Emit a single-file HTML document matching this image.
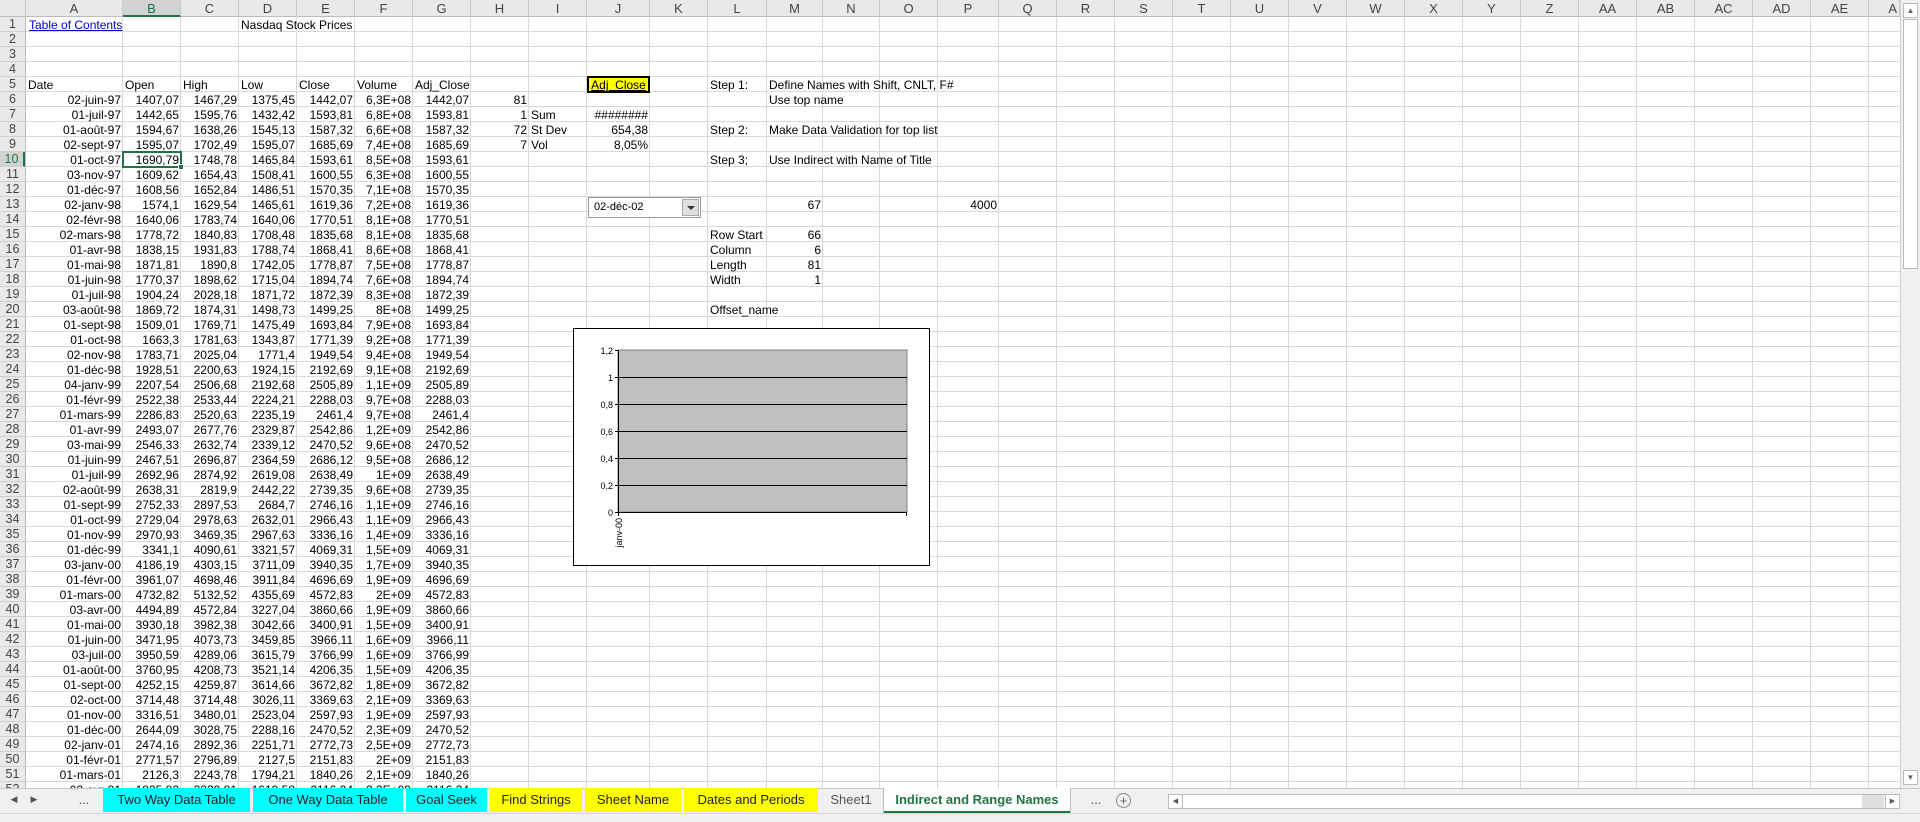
<!DOCTYPE html>
<html><head><meta charset="utf-8">
<style>
*{margin:0;padding:0;box-sizing:border-box}
body{width:1920px;height:822px;overflow:hidden;background:#fff;font-family:"Liberation Sans",Arial,sans-serif;font-size:12px;color:#000;position:relative}
#sheet{position:absolute;left:26px;top:17px;width:1874px;height:771px;background:repeating-linear-gradient(to bottom,transparent 0,transparent 14px,#d9d9d9 14px,#d9d9d9 15px)}
.vl{position:absolute;top:0;width:1px;height:771px;background:#d9d9d9}
#colh{position:absolute;left:0;top:0;width:1900px;height:17px;background:#e9e9e9;border-bottom:1px solid #bcbcbc}
#colh span{position:absolute;top:0;height:17px;line-height:17px;text-align:center;color:#444;font-size:13px;border-right:1px solid #c8c8c8}
#rowh{position:absolute;left:0;top:17px;width:26px;height:771px;background:#e9e9e9;border-right:1px solid #bcbcbc;overflow:hidden}
#rowh div{height:15px;line-height:15px;text-align:center;color:#444;font-size:12.5px;border-bottom:1px solid #d0d0d0}
.r,.t{top:calc(17px + (var(--r) - 1) * 15px)}
.r{position:absolute;left:0;height:15px;line-height:16px;width:1000px}
.r span{position:absolute;top:0;white-space:nowrap;text-align:right}
.a{left:27px;width:94px}.b{left:123px;width:56px}.c{left:181px;width:56px}.d{left:239px;width:56px}.e{left:297px;width:56px}.f{left:355px;width:56px}.g{left:413px;width:56px}
.t{position:absolute;white-space:nowrap;line-height:16px}
.tab{position:absolute;top:788px;height:24px;line-height:23px;text-align:center;font-size:13px;color:#222}
</style></head><body>
<div id="colh">
<span style="left:0;width:26px"></span>
<span style="left:26px;width:97px">A</span>
<span style="left:123px;width:58px;background:#d2d2d2;border-bottom:2px solid #217346;color:#217346">B</span>
<span style="left:181px;width:58px">C</span><span style="left:239px;width:58px">D</span><span style="left:297px;width:58px">E</span><span style="left:355px;width:58px">F</span><span style="left:413px;width:58px">G</span><span style="left:471px;width:58px">H</span><span style="left:529px;width:58px">I</span><span style="left:587px;width:63px">J</span><span style="left:650px;width:58px">K</span><span style="left:708px;width:59px">L</span><span style="left:767px;width:56px">M</span><span style="left:823px;width:57px">N</span><span style="left:880px;width:58px">O</span><span style="left:938px;width:61px">P</span><span style="left:999px;width:58px">Q</span><span style="left:1057px;width:58px">R</span><span style="left:1115px;width:58px">S</span><span style="left:1173px;width:58px">T</span><span style="left:1231px;width:58px">U</span><span style="left:1289px;width:58px">V</span><span style="left:1347px;width:58px">W</span><span style="left:1405px;width:58px">X</span><span style="left:1463px;width:58px">Y</span><span style="left:1521px;width:58px">Z</span><span style="left:1579px;width:58px">AA</span><span style="left:1637px;width:58px">AB</span><span style="left:1695px;width:58px">AC</span><span style="left:1753px;width:58px">AD</span><span style="left:1811px;width:58px">AE</span><span style="left:1869px;width:31px;text-align:right;padding-right:2px">A</span>
</div>
<div id="sheet">
<div class="vl" style="left:96px"></div><div class="vl" style="left:154px"></div><div class="vl" style="left:212px"></div><div class="vl" style="left:270px"></div><div class="vl" style="left:328px"></div><div class="vl" style="left:386px"></div><div class="vl" style="left:444px"></div><div class="vl" style="left:502px"></div><div class="vl" style="left:560px"></div><div class="vl" style="left:623px"></div><div class="vl" style="left:681px"></div><div class="vl" style="left:740px"></div><div class="vl" style="left:796px"></div><div class="vl" style="left:853px"></div><div class="vl" style="left:911px"></div><div class="vl" style="left:972px"></div><div class="vl" style="left:1030px"></div><div class="vl" style="left:1088px"></div><div class="vl" style="left:1146px"></div><div class="vl" style="left:1204px"></div><div class="vl" style="left:1262px"></div><div class="vl" style="left:1320px"></div><div class="vl" style="left:1378px"></div><div class="vl" style="left:1436px"></div><div class="vl" style="left:1494px"></div><div class="vl" style="left:1552px"></div><div class="vl" style="left:1610px"></div><div class="vl" style="left:1668px"></div><div class="vl" style="left:1726px"></div><div class="vl" style="left:1784px"></div><div class="vl" style="left:1842px"></div>
</div>
<div id="rowh">
<div>1</div><div>2</div><div>3</div><div>4</div><div>5</div><div>6</div><div>7</div><div>8</div><div>9</div><div style="background:#d2d2d2;color:#217346;border-right:2px solid #217346">10</div><div>11</div><div>12</div><div>13</div><div>14</div><div>15</div><div>16</div><div>17</div><div>18</div><div>19</div><div>20</div><div>21</div><div>22</div><div>23</div><div>24</div><div>25</div><div>26</div><div>27</div><div>28</div><div>29</div><div>30</div><div>31</div><div>32</div><div>33</div><div>34</div><div>35</div><div>36</div><div>37</div><div>38</div><div>39</div><div>40</div><div>41</div><div>42</div><div>43</div><div>44</div><div>45</div><div>46</div><div>47</div><div>48</div><div>49</div><div>50</div><div>51</div><div>52</div>
</div>

<div class="t" style="--r:1;left:29px;color:#0000d0;text-decoration:underline">Table of Contents</div>
<div class="t" style="--r:1;left:241px">Nasdaq Stock Prices</div>
<div class="t" style="--r:5;left:28px">Date</div>
<div class="t" style="--r:5;left:125px">Open</div>
<div class="t" style="--r:5;left:183px">High</div>
<div class="t" style="--r:5;left:241px">Low</div>
<div class="t" style="--r:5;left:299px">Close</div>
<div class="t" style="--r:5;left:357px">Volume</div>
<div class="t" style="--r:5;left:415px">Adj_Close</div>
<div class="t" style="--r:5;left:587px;width:63px;height:17px;margin-top:-1px;background:#ffff00;border:2px solid #000;text-align:center;line-height:14px;text-decoration:underline">Adj_Close</div>
<div class="t" style="--r:6;left:471px;width:56px;text-align:right">81</div>
<div class="t" style="--r:7;left:471px;width:56px;text-align:right">1</div>
<div class="t" style="--r:8;left:471px;width:56px;text-align:right">72</div>
<div class="t" style="--r:9;left:471px;width:56px;text-align:right">7</div>
<div class="t" style="--r:7;left:531px">Sum</div>
<div class="t" style="--r:8;left:531px">St Dev</div>
<div class="t" style="--r:9;left:531px">Vol</div>
<div class="t" style="--r:7;left:587px;width:61px;text-align:right">########</div>
<div class="t" style="--r:8;left:587px;width:61px;text-align:right">654,38</div>
<div class="t" style="--r:9;left:587px;width:61px;text-align:right">8,05%</div>
<div class="t" style="--r:5;left:710px">Step 1:</div>
<div class="t" style="--r:5;left:769px">Define Names with Shift, CNLT, F#</div>
<div class="t" style="--r:6;left:769px">Use top name</div>
<div class="t" style="--r:8;left:710px">Step 2:</div>
<div class="t" style="--r:8;left:769px">Make Data Validation for top list</div>
<div class="t" style="--r:10;left:710px">Step 3;</div>
<div class="t" style="--r:10;left:769px">Use Indirect with Name of Title</div>
<div class="t" style="--r:13;left:767px;width:54px;text-align:right">67</div>
<div class="t" style="--r:13;left:938px;width:59px;text-align:right">4000</div>
<div class="t" style="--r:15;left:710px">Row Start</div>
<div class="t" style="--r:16;left:710px">Column</div>
<div class="t" style="--r:17;left:710px">Length</div>
<div class="t" style="--r:18;left:710px">Width</div>
<div class="t" style="--r:15;left:767px;width:54px;text-align:right">66</div>
<div class="t" style="--r:16;left:767px;width:54px;text-align:right">6</div>
<div class="t" style="--r:17;left:767px;width:54px;text-align:right">81</div>
<div class="t" style="--r:18;left:767px;width:54px;text-align:right">1</div>
<div class="t" style="--r:20;left:710px">Offset_name</div>

<div style="position:absolute;left:588px;top:197px;width:113px;height:21px;border:1px solid #999;background:#fff">
<div style="position:absolute;left:5px;top:3px;font-size:11px">02-déc-02</div>
<div style="position:absolute;right:1px;top:1px;width:17px;height:17px;background:#e0e0e0;border:1px solid #aaa"><div style="position:absolute;left:4px;top:6px;width:0;height:0;border-left:4px solid transparent;border-right:4px solid transparent;border-top:4px solid #333"></div></div>
</div>

<div style="position:absolute;left:122px;top:151px;width:60px;height:17px;border:2px solid #217346"></div>
<div style="position:absolute;left:178px;top:164px;width:6px;height:6px;background:#217346;border:1px solid #fff"></div>

<div class="r" style="--r:6"><span class="a">02-juin-97</span><span class="b">1407,07</span><span class="c">1467,29</span><span class="d">1375,45</span><span class="e">1442,07</span><span class="f">6,3E+08</span><span class="g">1442,07</span></div>
<div class="r" style="--r:7"><span class="a">01-juil-97</span><span class="b">1442,65</span><span class="c">1595,76</span><span class="d">1432,42</span><span class="e">1593,81</span><span class="f">6,8E+08</span><span class="g">1593,81</span></div>
<div class="r" style="--r:8"><span class="a">01-août-97</span><span class="b">1594,67</span><span class="c">1638,26</span><span class="d">1545,13</span><span class="e">1587,32</span><span class="f">6,6E+08</span><span class="g">1587,32</span></div>
<div class="r" style="--r:9"><span class="a">02-sept-97</span><span class="b">1595,07</span><span class="c">1702,49</span><span class="d">1595,07</span><span class="e">1685,69</span><span class="f">7,4E+08</span><span class="g">1685,69</span></div>
<div class="r" style="--r:10"><span class="a">01-oct-97</span><span class="b">1690,79</span><span class="c">1748,78</span><span class="d">1465,84</span><span class="e">1593,61</span><span class="f">8,5E+08</span><span class="g">1593,61</span></div>
<div class="r" style="--r:11"><span class="a">03-nov-97</span><span class="b">1609,62</span><span class="c">1654,43</span><span class="d">1508,41</span><span class="e">1600,55</span><span class="f">6,3E+08</span><span class="g">1600,55</span></div>
<div class="r" style="--r:12"><span class="a">01-déc-97</span><span class="b">1608,56</span><span class="c">1652,84</span><span class="d">1486,51</span><span class="e">1570,35</span><span class="f">7,1E+08</span><span class="g">1570,35</span></div>
<div class="r" style="--r:13"><span class="a">02-janv-98</span><span class="b">1574,1</span><span class="c">1629,54</span><span class="d">1465,61</span><span class="e">1619,36</span><span class="f">7,2E+08</span><span class="g">1619,36</span></div>
<div class="r" style="--r:14"><span class="a">02-févr-98</span><span class="b">1640,06</span><span class="c">1783,74</span><span class="d">1640,06</span><span class="e">1770,51</span><span class="f">8,1E+08</span><span class="g">1770,51</span></div>
<div class="r" style="--r:15"><span class="a">02-mars-98</span><span class="b">1778,72</span><span class="c">1840,83</span><span class="d">1708,48</span><span class="e">1835,68</span><span class="f">8,1E+08</span><span class="g">1835,68</span></div>
<div class="r" style="--r:16"><span class="a">01-avr-98</span><span class="b">1838,15</span><span class="c">1931,83</span><span class="d">1788,74</span><span class="e">1868,41</span><span class="f">8,6E+08</span><span class="g">1868,41</span></div>
<div class="r" style="--r:17"><span class="a">01-mai-98</span><span class="b">1871,81</span><span class="c">1890,8</span><span class="d">1742,05</span><span class="e">1778,87</span><span class="f">7,5E+08</span><span class="g">1778,87</span></div>
<div class="r" style="--r:18"><span class="a">01-juin-98</span><span class="b">1770,37</span><span class="c">1898,62</span><span class="d">1715,04</span><span class="e">1894,74</span><span class="f">7,6E+08</span><span class="g">1894,74</span></div>
<div class="r" style="--r:19"><span class="a">01-juil-98</span><span class="b">1904,24</span><span class="c">2028,18</span><span class="d">1871,72</span><span class="e">1872,39</span><span class="f">8,3E+08</span><span class="g">1872,39</span></div>
<div class="r" style="--r:20"><span class="a">03-août-98</span><span class="b">1869,72</span><span class="c">1874,31</span><span class="d">1498,73</span><span class="e">1499,25</span><span class="f">8E+08</span><span class="g">1499,25</span></div>
<div class="r" style="--r:21"><span class="a">01-sept-98</span><span class="b">1509,01</span><span class="c">1769,71</span><span class="d">1475,49</span><span class="e">1693,84</span><span class="f">7,9E+08</span><span class="g">1693,84</span></div>
<div class="r" style="--r:22"><span class="a">01-oct-98</span><span class="b">1663,3</span><span class="c">1781,63</span><span class="d">1343,87</span><span class="e">1771,39</span><span class="f">9,2E+08</span><span class="g">1771,39</span></div>
<div class="r" style="--r:23"><span class="a">02-nov-98</span><span class="b">1783,71</span><span class="c">2025,04</span><span class="d">1771,4</span><span class="e">1949,54</span><span class="f">9,4E+08</span><span class="g">1949,54</span></div>
<div class="r" style="--r:24"><span class="a">01-déc-98</span><span class="b">1928,51</span><span class="c">2200,63</span><span class="d">1924,15</span><span class="e">2192,69</span><span class="f">9,1E+08</span><span class="g">2192,69</span></div>
<div class="r" style="--r:25"><span class="a">04-janv-99</span><span class="b">2207,54</span><span class="c">2506,68</span><span class="d">2192,68</span><span class="e">2505,89</span><span class="f">1,1E+09</span><span class="g">2505,89</span></div>
<div class="r" style="--r:26"><span class="a">01-févr-99</span><span class="b">2522,38</span><span class="c">2533,44</span><span class="d">2224,21</span><span class="e">2288,03</span><span class="f">9,7E+08</span><span class="g">2288,03</span></div>
<div class="r" style="--r:27"><span class="a">01-mars-99</span><span class="b">2286,83</span><span class="c">2520,63</span><span class="d">2235,19</span><span class="e">2461,4</span><span class="f">9,7E+08</span><span class="g">2461,4</span></div>
<div class="r" style="--r:28"><span class="a">01-avr-99</span><span class="b">2493,07</span><span class="c">2677,76</span><span class="d">2329,87</span><span class="e">2542,86</span><span class="f">1,2E+09</span><span class="g">2542,86</span></div>
<div class="r" style="--r:29"><span class="a">03-mai-99</span><span class="b">2546,33</span><span class="c">2632,74</span><span class="d">2339,12</span><span class="e">2470,52</span><span class="f">9,6E+08</span><span class="g">2470,52</span></div>
<div class="r" style="--r:30"><span class="a">01-juin-99</span><span class="b">2467,51</span><span class="c">2696,87</span><span class="d">2364,59</span><span class="e">2686,12</span><span class="f">9,5E+08</span><span class="g">2686,12</span></div>
<div class="r" style="--r:31"><span class="a">01-juil-99</span><span class="b">2692,96</span><span class="c">2874,92</span><span class="d">2619,08</span><span class="e">2638,49</span><span class="f">1E+09</span><span class="g">2638,49</span></div>
<div class="r" style="--r:32"><span class="a">02-août-99</span><span class="b">2638,31</span><span class="c">2819,9</span><span class="d">2442,22</span><span class="e">2739,35</span><span class="f">9,6E+08</span><span class="g">2739,35</span></div>
<div class="r" style="--r:33"><span class="a">01-sept-99</span><span class="b">2752,33</span><span class="c">2897,53</span><span class="d">2684,7</span><span class="e">2746,16</span><span class="f">1,1E+09</span><span class="g">2746,16</span></div>
<div class="r" style="--r:34"><span class="a">01-oct-99</span><span class="b">2729,04</span><span class="c">2978,63</span><span class="d">2632,01</span><span class="e">2966,43</span><span class="f">1,1E+09</span><span class="g">2966,43</span></div>
<div class="r" style="--r:35"><span class="a">01-nov-99</span><span class="b">2970,93</span><span class="c">3469,35</span><span class="d">2967,63</span><span class="e">3336,16</span><span class="f">1,4E+09</span><span class="g">3336,16</span></div>
<div class="r" style="--r:36"><span class="a">01-déc-99</span><span class="b">3341,1</span><span class="c">4090,61</span><span class="d">3321,57</span><span class="e">4069,31</span><span class="f">1,5E+09</span><span class="g">4069,31</span></div>
<div class="r" style="--r:37"><span class="a">03-janv-00</span><span class="b">4186,19</span><span class="c">4303,15</span><span class="d">3711,09</span><span class="e">3940,35</span><span class="f">1,7E+09</span><span class="g">3940,35</span></div>
<div class="r" style="--r:38"><span class="a">01-févr-00</span><span class="b">3961,07</span><span class="c">4698,46</span><span class="d">3911,84</span><span class="e">4696,69</span><span class="f">1,9E+09</span><span class="g">4696,69</span></div>
<div class="r" style="--r:39"><span class="a">01-mars-00</span><span class="b">4732,82</span><span class="c">5132,52</span><span class="d">4355,69</span><span class="e">4572,83</span><span class="f">2E+09</span><span class="g">4572,83</span></div>
<div class="r" style="--r:40"><span class="a">03-avr-00</span><span class="b">4494,89</span><span class="c">4572,84</span><span class="d">3227,04</span><span class="e">3860,66</span><span class="f">1,9E+09</span><span class="g">3860,66</span></div>
<div class="r" style="--r:41"><span class="a">01-mai-00</span><span class="b">3930,18</span><span class="c">3982,38</span><span class="d">3042,66</span><span class="e">3400,91</span><span class="f">1,5E+09</span><span class="g">3400,91</span></div>
<div class="r" style="--r:42"><span class="a">01-juin-00</span><span class="b">3471,95</span><span class="c">4073,73</span><span class="d">3459,85</span><span class="e">3966,11</span><span class="f">1,6E+09</span><span class="g">3966,11</span></div>
<div class="r" style="--r:43"><span class="a">03-juil-00</span><span class="b">3950,59</span><span class="c">4289,06</span><span class="d">3615,79</span><span class="e">3766,99</span><span class="f">1,6E+09</span><span class="g">3766,99</span></div>
<div class="r" style="--r:44"><span class="a">01-août-00</span><span class="b">3760,95</span><span class="c">4208,73</span><span class="d">3521,14</span><span class="e">4206,35</span><span class="f">1,5E+09</span><span class="g">4206,35</span></div>
<div class="r" style="--r:45"><span class="a">01-sept-00</span><span class="b">4252,15</span><span class="c">4259,87</span><span class="d">3614,66</span><span class="e">3672,82</span><span class="f">1,8E+09</span><span class="g">3672,82</span></div>
<div class="r" style="--r:46"><span class="a">02-oct-00</span><span class="b">3714,48</span><span class="c">3714,48</span><span class="d">3026,11</span><span class="e">3369,63</span><span class="f">2,1E+09</span><span class="g">3369,63</span></div>
<div class="r" style="--r:47"><span class="a">01-nov-00</span><span class="b">3316,51</span><span class="c">3480,01</span><span class="d">2523,04</span><span class="e">2597,93</span><span class="f">1,9E+09</span><span class="g">2597,93</span></div>
<div class="r" style="--r:48"><span class="a">01-déc-00</span><span class="b">2644,09</span><span class="c">3028,75</span><span class="d">2288,16</span><span class="e">2470,52</span><span class="f">2,3E+09</span><span class="g">2470,52</span></div>
<div class="r" style="--r:49"><span class="a">02-janv-01</span><span class="b">2474,16</span><span class="c">2892,36</span><span class="d">2251,71</span><span class="e">2772,73</span><span class="f">2,5E+09</span><span class="g">2772,73</span></div>
<div class="r" style="--r:50"><span class="a">01-févr-01</span><span class="b">2771,57</span><span class="c">2796,89</span><span class="d">2127,5</span><span class="e">2151,83</span><span class="f">2E+09</span><span class="g">2151,83</span></div>
<div class="r" style="--r:51"><span class="a">01-mars-01</span><span class="b">2126,3</span><span class="c">2243,78</span><span class="d">1794,21</span><span class="e">1840,26</span><span class="f">2,1E+09</span><span class="g">1840,26</span></div>
<div class="r" style="--r:52"><span class="a">02-avr-01</span><span class="b">1835,82</span><span class="c">2239,81</span><span class="d">1619,58</span><span class="e">2116,24</span><span class="f">2,3E+09</span><span class="g">2116,24</span></div>

<svg style="position:absolute;left:573px;top:328px" width="357" height="238" viewBox="0 0 357 238">
<rect x="0.5" y="0.5" width="356" height="237" fill="#fff" stroke="#000"/>
<rect x="45" y="22" width="289" height="162" fill="#c0c0c0" stroke="#808080"/>
<g stroke="#000" stroke-width="1">
<line x1="45" y1="49.5" x2="334" y2="49.5"/><line x1="45" y1="76.5" x2="334" y2="76.5"/><line x1="45" y1="103.5" x2="334" y2="103.5"/><line x1="45" y1="130.5" x2="334" y2="130.5"/><line x1="45" y1="157.5" x2="334" y2="157.5"/><line x1="45" y1="184.5" x2="334" y2="184.5"/>
<line x1="45.5" y1="22" x2="45.5" y2="188"/><line x1="333.5" y1="184" x2="333.5" y2="188"/>
<line x1="42" y1="22.5" x2="45" y2="22.5"/><line x1="42" y1="49.5" x2="45" y2="49.5"/><line x1="42" y1="76.5" x2="45" y2="76.5"/><line x1="42" y1="103.5" x2="45" y2="103.5"/><line x1="42" y1="130.5" x2="45" y2="130.5"/><line x1="42" y1="157.5" x2="45" y2="157.5"/><line x1="42" y1="184.5" x2="45" y2="184.5"/>
</g>
<g font-family="Liberation Sans,Arial,sans-serif" font-size="9" text-anchor="end">
<text x="40" y="26">1,2</text><text x="40" y="53">1</text><text x="40" y="80">0,8</text><text x="40" y="107">0,6</text><text x="40" y="134">0,4</text><text x="40" y="161">0,2</text><text x="40" y="188">0</text>
<text transform="translate(49,190) rotate(-90)" x="0" y="0">janv-00</text>
</g>
</svg>

<div style="position:absolute;left:1900px;top:0;width:20px;height:788px;background:#f0f0f0;border-left:1px solid #d0d0d0"></div>
<div style="position:absolute;left:1903px;top:3px;width:15px;height:15px;background:#fff;border:1px solid #bbb;font-size:8px;text-align:center;line-height:13px;color:#666">▲</div>
<div style="position:absolute;left:1903px;top:19px;width:15px;height:250px;background:#fff;border:1px solid #bbb"></div>
<div style="position:absolute;left:1903px;top:770px;width:15px;height:15px;background:#fff;border:1px solid #bbb;font-size:8px;text-align:center;line-height:13px;color:#666">▼</div>

<div style="position:absolute;left:0;top:788px;width:1920px;height:34px;background:#f0f0f0;border-top:1px solid #c6c6c6"></div>
<div style="position:absolute;left:0;top:813px;width:1920px;height:9px;background:#f0f0f0;border-top:1px solid #d6d6d6"></div>
<div class="tab" style="left:8px;width:12px;font-size:9px;color:#555">◀</div>
<div class="tab" style="left:28px;width:12px;font-size:9px;color:#555">▶</div>
<div class="tab" style="left:76px;width:16px;color:#555">...</div>
<div class="tab" style="left:103px;width:147px;background:#00ffff">Two Way Data Table</div>
<div class="tab" style="left:253px;width:150px;background:#00ffff">One Way Data Table</div>
<div class="tab" style="left:406px;width:81px;background:#00ffff">Goal Seek</div>
<div class="tab" style="left:490px;width:92px;background:#ffff00">Find Strings</div>
<div class="tab" style="left:585px;width:96px;background:#ffff00">Sheet Name</div>
<div class="tab" style="left:684px;width:134px;background:#ffff00">Dates and Periods</div>
<div class="tab" style="left:820px;width:62px;color:#555">Sheet1</div>
<div class="tab" style="left:884px;top:788px;height:25px;width:186px;background:#fff;color:#217346;font-weight:bold;border-bottom:2px solid #217346;box-shadow:1px 0 0 #bbb,-1px 0 0 #bbb">Indirect and Range Names</div>
<div class="tab" style="left:1088px;width:16px;color:#555">...</div>
<div style="position:absolute;left:1116px;top:793px;width:15px;height:15px;border:1px solid #888;border-radius:50%;text-align:center;line-height:13px;font-size:13px;color:#666">+</div>
<div style="position:absolute;left:1168px;top:794px;width:732px;height:15px;background:#fff;border:1px solid #bbb"></div>
<div style="position:absolute;left:1169px;top:795px;width:14px;height:13px;border-right:1px solid #bbb;font-size:7px;line-height:13px;text-align:center;color:#555">◀</div>
<div style="position:absolute;left:1862px;top:795px;width:22px;height:13px;background:#e0e0e0"></div>
<div style="position:absolute;left:1885px;top:795px;width:14px;height:13px;border-left:1px solid #bbb;font-size:7px;line-height:13px;text-align:center;color:#555">▶</div>
</body></html>
